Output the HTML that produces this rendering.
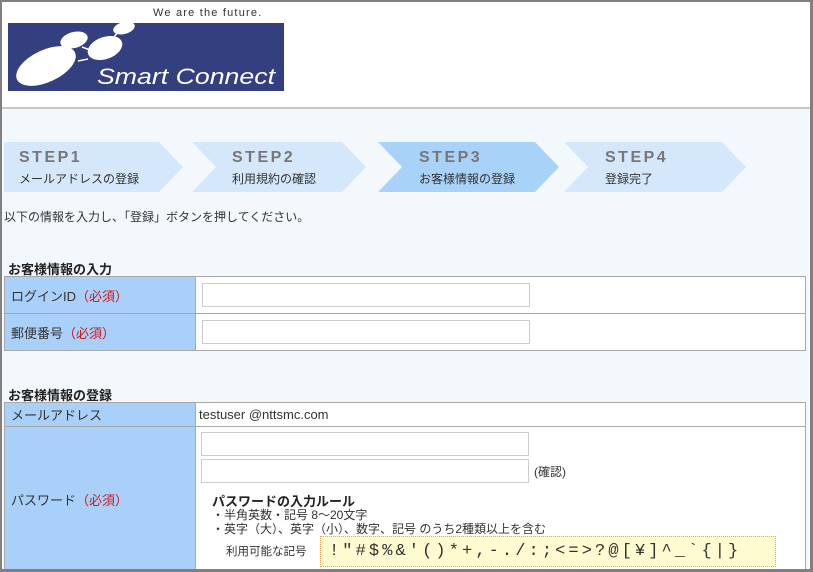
<!DOCTYPE html>
<html><head><meta charset="utf-8">
<style>
*{margin:0;padding:0;box-sizing:border-box}
body{width:813px;height:572px;overflow:hidden;background:#808080;font-family:"Liberation Sans","Noto Sans CJK JP",sans-serif;color:#333;position:relative}
.frame{position:absolute;left:2px;top:2px;width:808px;height:567px;background:#f3f8fc;overflow:hidden}
.hdr{position:absolute;left:0;top:0;width:808px;height:107px;background:#fff;border-bottom:2px solid #c8c8c8}
.a{position:absolute}
.step{position:absolute;top:140px;height:50px}
.step .t1{position:absolute;top:7px;font-size:16px;font-weight:bold;letter-spacing:2.5px;color:#777}
.step .t2{position:absolute;top:28px;font-size:12px;color:#333;white-space:nowrap}
table{position:absolute;left:2px;width:802px;border-collapse:collapse;background:#fff}
td{border:1px solid #a8a8a8;font-size:13px;vertical-align:middle}
td.l{background:#a9d0f8;width:191px;padding-left:6px;color:#333}
.req{color:#d01818}
.inp{display:inline-block;width:328px;height:24px;border:1px solid #ccc;background:#fff;vertical-align:middle}
h3{position:absolute;font-size:13px;font-weight:bold;color:#222;left:6px}
</style></head><body>
<div class="frame">
 <div class="hdr">
  <div class="a" style="left:151px;top:5px;font-size:11px;letter-spacing:1.2px;color:#333">We are the future.</div>
  <svg class="a" style="left:6px;top:21px" width="276" height="68" viewBox="0 0 276 68">
   <rect width="276" height="68" fill="#343f80"/>
   <ellipse cx="38" cy="43" rx="32" ry="16" fill="#fff" transform="rotate(-25 38 43)"/>
   <ellipse cx="66" cy="17" rx="14" ry="8" fill="#fff" transform="rotate(-15 66 17)"/>
   <ellipse cx="97" cy="25" rx="18" ry="11" fill="#fff" transform="rotate(-20 97 25)"/>
   <ellipse cx="116" cy="5" rx="11" ry="6" fill="#fff" transform="rotate(-15 116 5)"/>
   <path d="M74 24 L82 27 M106 14 L110 9 M70 38 L80 36" stroke="#fff" stroke-width="1.5"/>
   <text x="89" y="61" font-family="Liberation Sans" font-style="italic" font-size="22" fill="#fff" textLength="178" lengthAdjust="spacingAndGlyphs">Smart Connect</text>
  </svg>
 </div>
 <svg class="a" style="left:0;top:140px" width="760" height="50">
  <polygon points="2,0 157,0 181,25 157,50 2,50" fill="#d4e7fb"/>
  <polygon points="190,0 340,0 364,25 340,50 190,50 214,25" fill="#d4e7fb"/>
  <polygon points="376,0 533,0 557,25 533,50 376,50 400,25" fill="#a9d2f9"/>
  <polygon points="562,0 720,0 744,25 720,50 562,50 586,25" fill="#d4e7fb"/>
 </svg>
 <div class="step" style="left:17px"><div class="t1">STEP1</div><div class="t2">メールアドレスの登録</div></div>
 <div class="step" style="left:230px"><div class="t1">STEP2</div><div class="t2">利用規約の確認</div></div>
 <div class="step" style="left:417px"><div class="t1">STEP3</div><div class="t2">お客様情報の登録</div></div>
 <div class="step" style="left:603px"><div class="t1">STEP4</div><div class="t2">登録完了</div></div>
 <div class="a" style="left:2px;top:206px;font-size:12px;color:#333">以下の情報を入力し、「登録」ボタンを押してください。</div>
 <h3 style="top:257px">お客様情報の入力</h3>
 <table style="top:274px">
  <tr style="height:37px"><td class="l">ログインID<span class="req">（必須）</span></td><td style="padding-left:6px"><span class="inp"></span></td></tr>
  <tr style="height:37px"><td class="l">郵便番号<span class="req">（必須）</span></td><td style="padding-left:6px"><span class="inp"></span></td></tr>
 </table>
 <h3 style="top:383px">お客様情報の登録</h3>
 <table style="top:400px">
  <tr style="height:24px"><td class="l">メールアドレス</td><td style="padding-left:3px">testuser @nttsmc.com</td></tr>
  <tr style="height:145px"><td class="l">パスワード<span class="req">（必須）</span></td>
   <td style="position:relative;vertical-align:top">
    <span class="inp a" style="left:5px;top:5px"></span>
    <span class="inp a" style="left:5px;top:32px"></span>
    <span class="a" style="left:338px;top:36px;font-size:12px">(確認)</span>
    <div class="a" style="left:16px;top:64px;font-size:13px;font-weight:bold;color:#222">パスワードの入力ルール</div>
    <div class="a" style="left:16px;top:81px;font-size:12px;line-height:14px;white-space:nowrap">・半角英数・記号 8～20文字<br>・英字（大）、英字（小）、数字、記号 のうち2種類以上を含む</div>
    <div class="a" style="left:30px;top:116px;font-size:11.5px">利用可能な記号</div>
    <div class="a" style="left:124px;top:109px;width:456px;height:31px;background:#fffbd0;border:1px dotted #f0a050;font-family:'Liberation Mono',monospace;font-size:17px;line-height:29px;padding-left:8px;letter-spacing:3.1px;white-space:nowrap;color:#333">!"#$%&amp;'()*+,-./:;&lt;=&gt;?@[¥]^_`{|}</div>
   </td></tr>
 </table>
</div>
</body></html>
